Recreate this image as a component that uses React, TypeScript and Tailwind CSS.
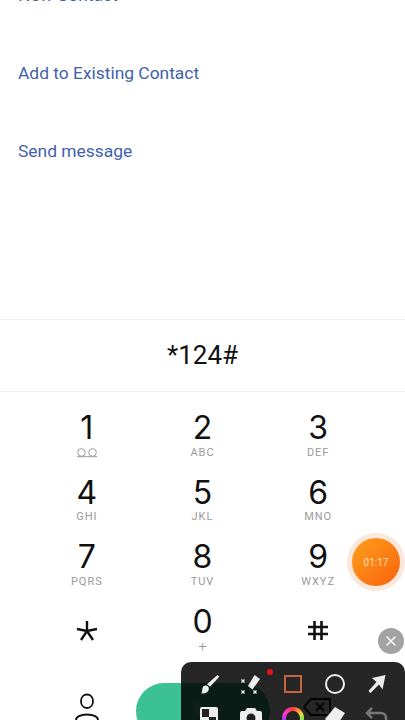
import { Phone, X } from "lucide-react";

const keys = [
  { digit: "1", sub: "" },
  { digit: "2", sub: "ABC" },
  { digit: "3", sub: "DEF" },
  { digit: "4", sub: "GHI" },
  { digit: "5", sub: "JKL" },
  { digit: "6", sub: "MNO" },
  { digit: "7", sub: "PQRS" },
  { digit: "8", sub: "TUV" },
  { digit: "9", sub: "WXYZ" },
];

function VoicemailGlyph() {
  return (
    <svg width="22" height="10" viewBox="0 0 22 10" fill="none" stroke="#9a9a9a" strokeWidth="1">
      <circle cx="5.5" cy="4.5" r="3.8" />
      <circle cx="16.5" cy="4.5" r="3.8" />
      <path d="M1 8.7h20" />
    </svg>
  );
}

function Toolbar() {
  return (
    <div className="absolute left-[181px] top-[662px] h-[70px] w-[224px] rounded-t-[10px] bg-black/85">
      <div className="grid grid-cols-5 gap-y-[9px] px-[7px] pt-[8px]">
        <div className="flex h-[28px] justify-center">
          <svg width="26" height="28" viewBox="0 0 26 28" fill="#eeeeee">
            <path d="M21.500 5l1.800 1.800-9.300 10-3-2.500z" />
            <path d="M9.500 15.500c2.300 0 3.800 1.800 3.300 4-.6 3-3.800 4.300-7.800 3.800 1.800-1.200.9-3 1.400-4.800.4-1.800 1.600-3 3.100-3z" />
          </svg>
        </div>
        <div className="flex h-[28px] justify-center">
          <svg width="30" height="28" viewBox="0 0 30 28">
            <path d="M18.500 5l5.500 4-7.500 10.500-4.500-3.500z" fill="#eeeeee" />
            <path d="M5.500 9.500l3 3M8.500 9.500l-3 3M5.500 20.500l3 3M8.500 20.500l-3 3M17.500 20.500l3 3M20.500 20.500l-3 3" stroke="#eeeeee" strokeWidth="1.300" fill="none" />
          </svg>
        </div>
        <div className="flex h-[28px] items-center justify-center">
          <div className="h-[18px] w-[18px] border-2 border-[#c8643a]" />
        </div>
        <div className="flex h-[28px] items-center justify-center">
          <div className="h-[20px] w-[20px] rounded-full border-2 border-[#eeeeee]" />
        </div>
        <div className="flex h-[28px] items-center justify-center">
          <svg width="20" height="20" viewBox="0 0 20 20" fill="#eeeeee">
            <path d="M18.500 1L5 4l4.500 4-8 9 2 2 8.500-8.500 3.500 5z" />
          </svg>
        </div>

        <div className="flex h-[28px] justify-center">
          <div className="grid h-[20px] w-[18px] grid-cols-2 grid-rows-2 overflow-hidden rounded-[2px] border-2 border-[#eeeeee] bg-[#eeeeee]">
            <div className="bg-[#222222]" />
            <div />
            <div />
            <div className="bg-[#222222]" />
          </div>
        </div>
        <div className="flex h-[28px] justify-center">
          <svg width="22" height="20" viewBox="0 0 22 20" fill="#eeeeee">
            <path d="M7 1h8l2 3h3a2 2 0 0 1 2 2v12H0V6a2 2 0 0 1 2-2h3z" />
            <circle cx="11" cy="11" r="4.500" fill="#222222" />
          </svg>
        </div>
        <div className="flex h-[28px] justify-center">
          <div className="h-[22px] w-[22px] rounded-full bg-[conic-gradient(#ff3b3b,#ffd23b,#3bff6b,#3bd5ff,#7a3bff,#ff3bd0,#ff3b3b)] p-[4px]">
            <div className="h-full w-full rounded-full bg-[#222222]" />
          </div>
        </div>
        <div className="flex h-[28px] justify-center">
          <svg width="26" height="20" viewBox="0 0 26 20" fill="#eeeeee">
            <path d="M13 0l10 6-8 12H9L3 12z" />
          </svg>
        </div>
        <div className="flex h-[28px] justify-center">
          <svg width="24" height="20" viewBox="0 0 24 20" fill="none" stroke="#777777" strokeWidth="2.500">
            <path d="M7 1L2 6l5 5M2 6h14a5 5 0 0 1 5 5v5" />
          </svg>
        </div>
      </div>
    </div>
  );
}

export default function App() {
  return (
    <div
      className="relative h-[720px] w-[405px] overflow-hidden bg-white"
      style={{ fontFamily: "Roboto, 'Noto Sans', sans-serif" }}
    >
      <div className="-mt-[17px] flex h-[337px] flex-col gap-[54px] border-b border-[#f0f0f0] pl-[18px] text-[17.4px] leading-[24px] text-[#3f62ab]">
        <div>New Contact</div>
        <div>Add to Existing Contact</div>
        <div>Send message</div>
      </div>

      <div className="flex h-[72px] items-center justify-center border-b border-[#f0f0f0] text-[26px] text-[#111111]">
        *124#
      </div>

      <div className="grid grid-cols-3 px-[29px] pt-[14px]">
        {keys.map((k) => (
          <div key={k.digit} className="flex h-[64.5px] flex-col items-center">
            <div className="text-[32px] font-normal leading-[44px] text-[#111111]" style={{ fontFamily: "Inter, sans-serif" }}>
              {k.digit}
            </div>
            <div className="-mt-[4px] flex h-[14px] items-center text-[11px] tracking-[1px] text-[#9a9a9a]">
              {k.sub || <VoicemailGlyph />}
            </div>
          </div>
        ))}
        <div className="flex h-[64.5px] justify-center pt-[20px]">
          <svg width="22" height="22" viewBox="0 0 22 22" fill="none" stroke="#111111" strokeWidth="2.400">
            <path d="M11 1v10M1 9l10 2 10-2M11 11l-6 9M11 11l6 9" />
          </svg>
        </div>
        <div className="flex h-[64.5px] flex-col items-center pt-[4px]">
          <div className="text-[32px] font-normal leading-[36px] text-[#111111]" style={{ fontFamily: "Inter, sans-serif" }}>
            0
          </div>
          <div className="-mt-[1px] flex h-[14px] items-center text-[15px] font-light leading-[14px] text-[#9a9a9a]">+</div>
        </div>
        <div className="flex h-[64.5px] justify-center pt-[20px]">
          <svg width="22" height="22" viewBox="0 0 22 22" fill="none" stroke="#111111" strokeWidth="2.600">
            <path d="M7.500 1v19M14.500 1v19M1 7h20M1 14h20" />
          </svg>
        </div>

        <div className="flex justify-center pt-[29px]">
          <svg width="28" height="30" viewBox="0 0 28 30" fill="none" stroke="#111111" strokeWidth="1.800">
            <path d="M14 1.500c3.500 0 6 2.600 6 6.500 0 3.500-2 7-6 7s-6-3.500-6-7c0-3.900 2.500-6.500 6-6.500z" />
            <path d="M3 27c0-3 4-5.500 11-5.500S25 24 25 27c0 1-1 1.500-2 1.500H5c-1 0-2-.5-2-1.500z" />
          </svg>
        </div>
        <div className="flex justify-center pt-[19px]">
          <div className="flex h-[56px] w-[134px] shrink-0 items-center justify-center rounded-full bg-[#3cc194]">
            <Phone className="h-[24px] w-[24px] fill-[#5ad0a8] text-[#5ad0a8]" />
          </div>
        </div>
        <div className="flex justify-center pt-[33px]">
          <svg className="-ml-[3px]" width="30" height="20" viewBox="0 0 30 20" fill="none" stroke="#000000" strokeWidth="1.800">
            <path d="M9 2h19v16H9l-7-8z" />
            <path d="M14 6l8 8M22 6l-8 8" />
          </svg>
        </div>
      </div>

      <div className="absolute left-[347px] top-[533px] flex h-[58px] w-[58px] items-center justify-center rounded-full bg-[#fbe7dc]">
        <div className="flex h-[48px] w-[48px] items-center justify-center rounded-full bg-gradient-to-br from-[#ff9f1c] to-[#f8600c] text-[10px] text-[#ffe0b0]">
          01:17
        </div>
      </div>

      <div className="absolute left-[378px] top-[628px] flex h-[26px] w-[26px] items-center justify-center rounded-full bg-[#a3a3a3]">
        <X className="h-[16px] w-[16px] text-white" />
      </div>

      <Toolbar />
      <div className="absolute left-[267px] top-[669px] h-[6px] w-[6px] rounded-full bg-[#ee1111]" />
    </div>
  );
}
